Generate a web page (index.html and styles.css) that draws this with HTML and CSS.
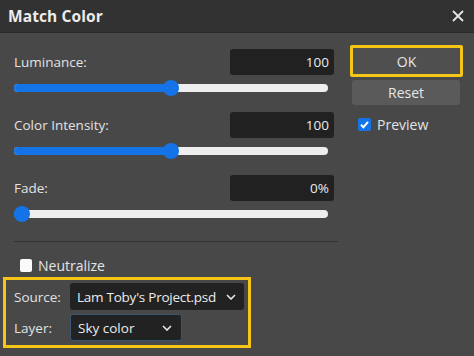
FILE: index.html
```html
<!DOCTYPE html>
<html>
<head>
<meta charset="utf-8">
<link rel="stylesheet" href="styles.css">
</head>
<body>
<div class="dialog">
  <div class="titlebar">
    <span class="title">Match Color</span>
    <svg class="close" width="12" height="12" viewBox="0 0 12 12"><path d="M1 1L11 11M11 1L1 11" stroke="#e6e6e6" stroke-width="1.8" fill="none"/></svg>
  </div>
  <div class="content">
    <div class="left">
      <div class="field">
        <div class="field-head"><span class="label">Luminance:</span><div class="num">100</div></div>
        <div class="slider"><div class="track"><div class="fill" style="width:157px"></div></div><div class="thumb" style="left:149px"></div></div>
      </div>
      <div class="field">
        <div class="field-head"><span class="label">Color Intensity:</span><div class="num">100</div></div>
        <div class="slider"><div class="track"><div class="fill" style="width:157px"></div></div><div class="thumb" style="left:149px"></div></div>
      </div>
      <div class="field">
        <div class="field-head"><span class="label">Fade:</span><div class="num">0%</div></div>
        <div class="slider"><div class="track"><div class="fill" style="width:8px"></div></div><div class="thumb" style="left:0px"></div></div>
      </div>
      <div class="sep"></div>
    </div>
    <div class="right">
      <div class="ok-ring"><button class="btn ok">OK</button></div>
      <button class="btn reset">Reset</button>
      <label class="check-row preview"><span class="cb checked"><svg width="13" height="13" viewBox="0 0 13 13"><path d="M3 6.8L5.4 9.2L10 3.8" stroke="#fff" stroke-width="2" fill="none"/></svg></span><span>Preview</span></label>
    </div>
  </div>
  <div class="bottom">
    <label class="check-row neutral"><span class="cb white"></span><span>Neutralize</span></label>
    <div class="highlight">
      <div class="sel-row">
        <span class="label sel-label">Source:</span>
        <div class="select source"><span>Lam Toby's Project.psd</span><svg width="10" height="6" viewBox="0 0 10 6"><path d="M1 1L5 5L9 1" stroke="#e6e6e6" stroke-width="1.6" fill="none"/></svg></div>
      </div>
      <div class="sel-row">
        <span class="label sel-label">Layer:</span>
        <div class="select layer"><span>Sky color</span><svg width="10" height="6" viewBox="0 0 10 6"><path d="M1 1L5 5L9 1" stroke="#e6e6e6" stroke-width="1.6" fill="none"/></svg></div>
      </div>
    </div>
  </div>
</div>
</body>
</html>
```
FILE: styles.css
```css
* { box-sizing: border-box; }
html, body { margin: 0; padding: 0; }
body {
  width: 474px;
  height: 356px;
  background: #484848;
  font-family: "Open Sans", "Noto Sans", sans-serif;
  font-size: 13.5px;
  color: #e4e4e4;
  overflow: hidden;
}
.dialog { width: 474px; height: 356px; background: #484848; }
.titlebar {
  height: 33px;
  background: #323232;
  border-bottom: 1px solid #292929;
  display: flex;
  align-items: center;
  justify-content: space-between;
  padding: 0 10px 0 8px;
}
.title { font-weight: 700; font-size: 15.5px; color: #ececec; letter-spacing: 0.1px; }
.close { display: block; }
.content { display: flex; }
.left { margin-left: 14px; width: 324px; padding-top: 16px; }
.field { margin-bottom: 16px; }
.field:last-of-type { margin-bottom: 0; }
.field-head {
  display: flex;
  justify-content: space-between;
  align-items: center;
  width: 320px;
  height: 26px;
}
.label { color: #e2e2e2; white-space: nowrap; }
.num {
  width: 104px;
  height: 26px;
  background: #212121;
  border-radius: 3px;
  text-align: right;
  padding-right: 5px;
  line-height: 26px;
  color: #ececec;
}
.slider { position: relative; width: 314px; height: 16px; margin-top: 5px; }
.track {
  position: absolute;
  left: 0; right: 0; top: 4px;
  height: 8px;
  border-radius: 4px;
  background: #eeeeee;
  overflow: hidden;
}
.fill { height: 8px; background: #1473e6; }
.thumb {
  position: absolute;
  top: 0;
  width: 16px;
  height: 16px;
  border-radius: 50%;
  background: #1473e6;
}
.sep { width: 324px; height: 1px; background: #333; margin-top: 19px; }
.right { margin-left: 12px; padding-top: 12px; width: 113px; }
.ok-ring {
  width: 113px;
  height: 32px;
  border: 3px solid #f5c518;
  border-radius: 2px;
}
.btn {
  font-family: inherit;
  font-size: 14px;
  color: #e6e6e6;
  border: none;
  border-radius: 3px;
  display: block;
  padding: 0;
}
.ok { width: 107px; height: 26px; background: #4f4f4f; border-radius: 0; }
.reset { width: 108px; height: 25px; margin: 3px 0 0 2px; background: #5a5a5a; }
.check-row { display: flex; align-items: center; gap: 6px; white-space: nowrap; }
.cb { width: 13px; height: 13px; border-radius: 2px; display: block; flex: none; }
.cb svg { display: block; }
.checked { background: #1473e6; }
.white { background: #fafafa; }
.preview { margin: 10px 0 0 8px; height: 18px; font-size: 14px; }
.bottom { padding-left: 3px; }
.neutral { margin: 14px 0 0 17px; height: 18px; gap: 6px; font-size: 14px; }
.neutral .cb { width: 12px; height: 13px; }
.highlight {
  margin-top: 3px;
  width: 248px;
  height: 71px;
  border: 3px solid #f5c518;
  padding: 3px 0 0 8px;
}
.sel-row { display: flex; align-items: center; height: 27px; margin-bottom: 4px; }
.sel-label { width: 56px; }
.select {
  height: 27px;
  background: #222;
  border-radius: 3px;
  display: flex;
  align-items: center;
  justify-content: space-between;
  color: #ececec;
  white-space: nowrap;
  font-size: 13.5px;
}
.source { width: 174px; padding: 0 8px 0 7px; letter-spacing: -0.25px; }
.layer { width: 112px; padding: 0 9px 0 7px; border: 1px solid #3b5572; }
.select svg { display: block; flex: none; }
```
